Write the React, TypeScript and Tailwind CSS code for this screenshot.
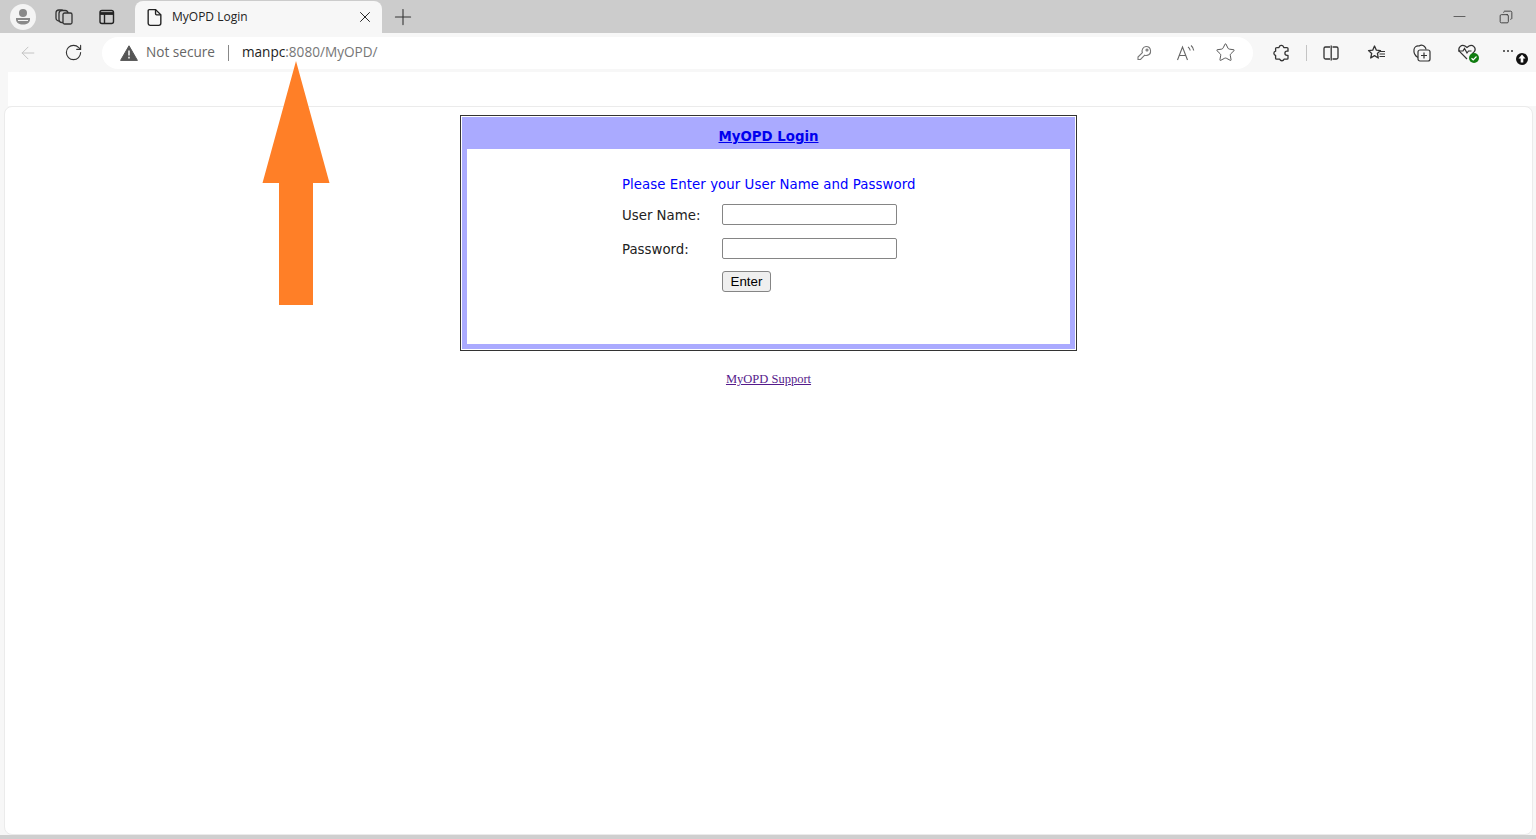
import { ArrowLeft, Copy, Minus, Plus, RotateCw, Star, X } from 'lucide-react';

const ui = "font-['Open_Sans',sans-serif]";

// ─── Browser icons ────────────────────────────────────────────────────────────
function ProfileIcon() {
  return (
    <div className="w-[26px] h-[26px] rounded-full bg-[#f4f4f4] flex items-center justify-center">
      <svg width="16" height="18" viewBox="0 0 16 18">
        <circle cx="8" cy="5" r="4" fill="#8a8a8a" />
        <path d="M1 10h14v1.5c0 3-3 5-7 5s-7-2-7-5z" fill="#8a8a8a" />
        <path d="M3 12.5h10" stroke="#f4f4f4" strokeWidth="1" />
      </svg>
    </div>
  );
}

function WorkspacesIcon() {
  return (
    <svg width="20" height="20" viewBox="0 0 20 20" fill="none" stroke="#333" strokeWidth="1.3">
      <rect x="2" y="3" width="8" height="11" rx="3" />
      <rect x="5" y="3.5" width="9" height="12" rx="3" fill="#ccc" />
      <rect x="9" y="6" width="9" height="11" rx="1.5" fill="#ccc" />
    </svg>
  );
}

function TabsIcon() {
  return (
    <svg width="18" height="18" viewBox="0 0 18 18" fill="none" stroke="#222" strokeWidth="1.4">
      <rect x="2" y="2.5" width="13.5" height="13" rx="2" />
      <path d="M2 5.5h13.5" strokeWidth="2.8" />
      <path d="M6.5 5.5v10" />
    </svg>
  );
}

function PageIcon() {
  return (
    <svg width="17" height="19" viewBox="0 0 16 18" fill="none" stroke="#222" strokeWidth="1.3">
      <path d="M3 1.500h6l5 5v8a2 2 0 0 1-2 2H4a2 2 0 0 1-2-2v-12a1 1 0 0 1 1-1z" />
      <path d="M9 1.500v4a1 1 0 0 0 1 1h4" />
    </svg>
  );
}

function WarningIcon() {
  return (
    <svg width="18" height="16" viewBox="0 0 18 16">
      <path d="M9 .8 17.400 15.400H.6z" fill="#555" stroke="#555" strokeLinejoin="round" />
      <path d="M9 5.500v5M9 11.800v1.600" stroke="#f7f7f7" strokeWidth="1.500" />
    </svg>
  );
}

function KeyIcon() {
  return (
    <svg width="18" height="18" viewBox="0 0 18 18" fill="none" stroke="#777" strokeWidth="1.100">
      <path d="M11 2.500a4.500 4.500 0 0 1 1 8.900c-.8.2-1.700.1-2.300-.2L5.500 15.500H3v-2.500l4.400-4.300A4.500 4.500 0 0 1 11 2.500z" />
      <circle cx="12" cy="6" r="1" />
    </svg>
  );
}

function ReadAloudIcon() {
  return (
    <svg width="20" height="18" viewBox="0 0 20 18" fill="none" stroke="#666" strokeWidth="1.100">
      <path d="M1.500 16 6.500 3l5 13M3.200 11.500h6.600" />
      <path d="M12 3c1.200.8 2 2 2.200 3.500M15 1.500c1.500 1.200 2.500 3 2.700 5" />
    </svg>
  );
}

function ExtensionIcon() {
  return (
    <svg width="18" height="18" viewBox="0 0 18 18" fill="none" stroke="#333" strokeWidth="1.300" strokeLinejoin="round">
      <path d="M6 3.500a2.400 2.400 0 0 1 4.600-.6l.2.7h3.200a1 1 0 0 1 1 1v2.600h-1a2 2 0 0 0 0 4.200h1v2.800a1 1 0 0 1-1 1h-3a2.200 2.200 0 0 1-4.200 0H3.600a1 1 0 0 1-1-1v-2.700a2.200 2.200 0 0 1 0-4.300V4.600a1 1 0 0 1 1-1z" />
    </svg>
  );
}

function SplitIcon() {
  return (
    <svg width="18" height="18" viewBox="0 0 18 18" fill="none" stroke="#333" strokeWidth="1.300">
      <path d="M8 3H3.500A1.500 1.500 0 0 0 2 4.500v9A1.500 1.500 0 0 0 3.500 15H8M10.500 3h4A1.500 1.500 0 0 1 16 4.500v9a1.500 1.500 0 0 1-1.500 1.500h-4" />
      <path d="M9.200 1.500v15" />
    </svg>
  );
}

function FavoritesIcon() {
  return (
    <svg width="20" height="18" viewBox="0 0 20 18" fill="none" stroke="#333" strokeWidth="1.300" strokeLinejoin="round">
      <path d="M7.500 2 9.400 6.200l4.100.4-3.100 2.800.9 4.600-3.800-2.400L3.700 14l1-4.600L1.500 6.600l4.200-.4z" />
      <path d="M13 7.500h5M12.500 10h5.500M12.500 12.500h5.500" strokeWidth="1.100" />
    </svg>
  );
}

function CollectionsIcon() {
  return (
    <svg width="20" height="20" viewBox="0 0 20 20" fill="none" stroke="#333" strokeWidth="1.200">
      <path d="M6 14.500C3.500 13 1.500 10 2 6.500 2.300 4 4.500 2.500 7 3c1.500-1 4-1 5.500.5 1 1 1.500 2 1.500 3" />
      <rect x="6" y="7" width="12" height="11" rx="2" fill="#f7f7f7" />
      <path d="M12 9.500v6M9 12.500h6" />
    </svg>
  );
}

function HealthIcon() {
  return (
    <div className="relative w-[20px] h-[20px]">
      <svg width="20" height="18" viewBox="0 0 20 18" fill="none" stroke="#333" strokeWidth="1.200">
        <path d="M10 16 2.500 8.500a4 4 0 0 1 5.500-5.500l2 1.500 2-1.500a4 4 0 0 1 5.500 5.500L15 11" />
        <path d="M1 8h5l1.500-2.500L10 10l1.500-2h3" />
      </svg>
      <span className="absolute right-[-2px] bottom-[0px] w-[10px] h-[10px] rounded-full bg-[#107c10] flex items-center justify-center">
        <svg width="8" height="8" viewBox="0 0 8 8" fill="none" stroke="#fff" strokeWidth="1.200">
          <path d="M1.500 4.200 3.200 5.800 6.500 2.500" />
        </svg>
      </span>
    </div>
  );
}

function MoreIcon() {
  return (
    <div className="relative w-[20px] h-[20px]">
      <div className="flex gap-[2px] pt-[7px]">
        <span className="w-[2px] h-[2px] rounded-full bg-[#333]" />
        <span className="w-[2px] h-[2px] rounded-full bg-[#333]" />
        <span className="w-[2px] h-[2px] rounded-full bg-[#333]" />
      </div>
      <span className="absolute right-[-5px] bottom-[-2px] w-[12px] h-[12px] rounded-full bg-[#111] flex items-center justify-center">
        <svg width="8" height="9" viewBox="0 0 8 9" fill="#fff">
          <path d="M4 .5 7.500 4.500H5.300V8.500H2.700V4.500H.5z" />
        </svg>
      </span>
    </div>
  );
}

// ─── Browser chrome ───────────────────────────────────────────────────────────
function TabBar() {
  return (
    <div className="h-[33px] bg-[#cccccc] flex items-center shrink-0">
      <div className="pl-[10px] w-[135px] flex items-center">
        <ProfileIcon />
        <div className="ml-[18px]"><WorkspacesIcon /></div>
        <div className="ml-[24px]"><TabsIcon /></div>
      </div>
      <div className="w-[247px] h-[33px] mt-[1px] bg-[#f7f7f7] rounded-t-[8px] flex items-center pl-[11px] pr-[8px]">
        <PageIcon />
        <span className={`${ui} ml-[9px] text-[12px] text-[#222] flex-1`}>MyOPD Login</span>
        <X size={18} strokeWidth={1.3} color="#222" />
      </div>
      <Plus size={26} strokeWidth={1} color="#333" className="ml-[8px]" />
      <div className="flex-1" />
      <Minus size={19} strokeWidth={1} color="#444" className="mr-[30px]" />
      <Copy size={14} strokeWidth={1.500} color="#333" className="mr-[23px] -scale-x-100" />
    </div>
  );
}

function Toolbar() {
  return (
    <div className="h-[39px] bg-[#f7f7f7] flex items-center shrink-0">
      <ArrowLeft size={20} strokeWidth={1.200} color="#c4c4c4" className="ml-[18px]" />
      <RotateCw size={19} strokeWidth={1.400} color="#333" className="ml-[26px]" />
      <div className="ml-[19px] w-[1151px] h-[32px] bg-white rounded-full flex items-center pl-[18px] pr-[17px]">
        <WarningIcon />
        <span className={`${ui} ml-[8px] text-[13.6px] text-[#666]`}>Not secure</span>
        <span className="ml-[13px] w-px h-[16px] bg-[#888]" />
        <span className={`${ui} ml-[13px] text-[13.6px] text-[#777] flex-1`}>
          <span className="text-[#222]">manpc</span>:8080/MyOPD/
        </span>
        <KeyIcon />
        <div className="ml-[23px]"><ReadAloudIcon /></div>
        <Star size={21} strokeWidth={1} color="#444" className="ml-[19px]" />
      </div>
      <div className="ml-[20px]"><ExtensionIcon /></div>
      <span className="ml-[15px] w-px h-[16px] bg-[#c4c4c4]" />
      <div className="ml-[15px]"><SplitIcon /></div>
      <div className="ml-[27px]"><FavoritesIcon /></div>
      <div className="ml-[25px]"><CollectionsIcon /></div>
      <div className="ml-[25px]"><HealthIcon /></div>
      <div className="ml-[26px]"><MoreIcon /></div>
    </div>
  );
}

// ─── Login page ───────────────────────────────────────────────────────────────
function LoginBox() {
  const input = 'h-[21px] w-[175px] border border-[#858585] rounded-[2px] bg-white';
  return (
    <div className="mx-auto w-[617px] border border-[#333] p-[1px] font-['DejaVu_Sans',sans-serif]">
      <div className="border-[5px] border-t-0 border-[#aaaaff] bg-white h-[232px] flex flex-col">
        <div className="h-[32px] -mx-[1px] bg-[#aaaaff] flex items-end justify-center pb-[4px] shrink-0">
          <a href="#" className="text-[13.33px] font-bold text-[#0000ee] underline leading-[17px]">MyOPD Login</a>
        </div>
        <div className="pl-[155px] pt-[28px] text-[13.33px]">
          <p className="text-[#0000ff] leading-[16px] tracking-[0.05px]">Please Enter your User Name and Password</p>
          <div className="grid grid-cols-[100px_175px] mt-[11px] gap-y-[12px] items-center text-[#222]">
            <label className="pt-[2px]">User Name:</label>
            <input className={input} />
            <label className="pt-[2px]">Password:</label>
            <input className={input} />
            <div />
            <button className="-mt-px justify-self-start h-[21px] w-[49px] border border-[#858585] rounded-[3px] bg-[#efefef] text-[13.33px] text-black font-['Liberation_Sans',sans-serif] leading-none">Enter</button>
          </div>
        </div>
      </div>
    </div>
  );
}

export default function App() {
  return (
    <div className="relative h-[839px] overflow-hidden bg-[#f7f7f7] flex flex-col">
      <TabBar />
      <Toolbar />
      <div className="h-[34px] ml-[8px] bg-white shrink-0" />
      <div className="flex-1 ml-[4px] mr-[3px] mb-[4px] bg-white border border-[#ebebeb] rounded-[8px] pt-[8px]">
        <LoginBox />
        <div className="mt-[14px] text-center">
          <a href="#" className="font-['Liberation_Serif',serif] text-[12.500px] text-[#551a8b] underline">MyOPD Support</a>
        </div>
      </div>
      <div className="absolute left-0 right-0 bottom-0 h-[4px] bg-[#cfcfcf]" />
      {/* annotation arrow drawn over the screenshot */}
      <svg className="absolute left-[262px] top-[61px]" width="68" height="244" viewBox="0 0 68 244">
        <path d="M34 0 67.500 122H51V244H17V122H.5z" fill="#ff7f27" />
      </svg>
    </div>
  );
}
